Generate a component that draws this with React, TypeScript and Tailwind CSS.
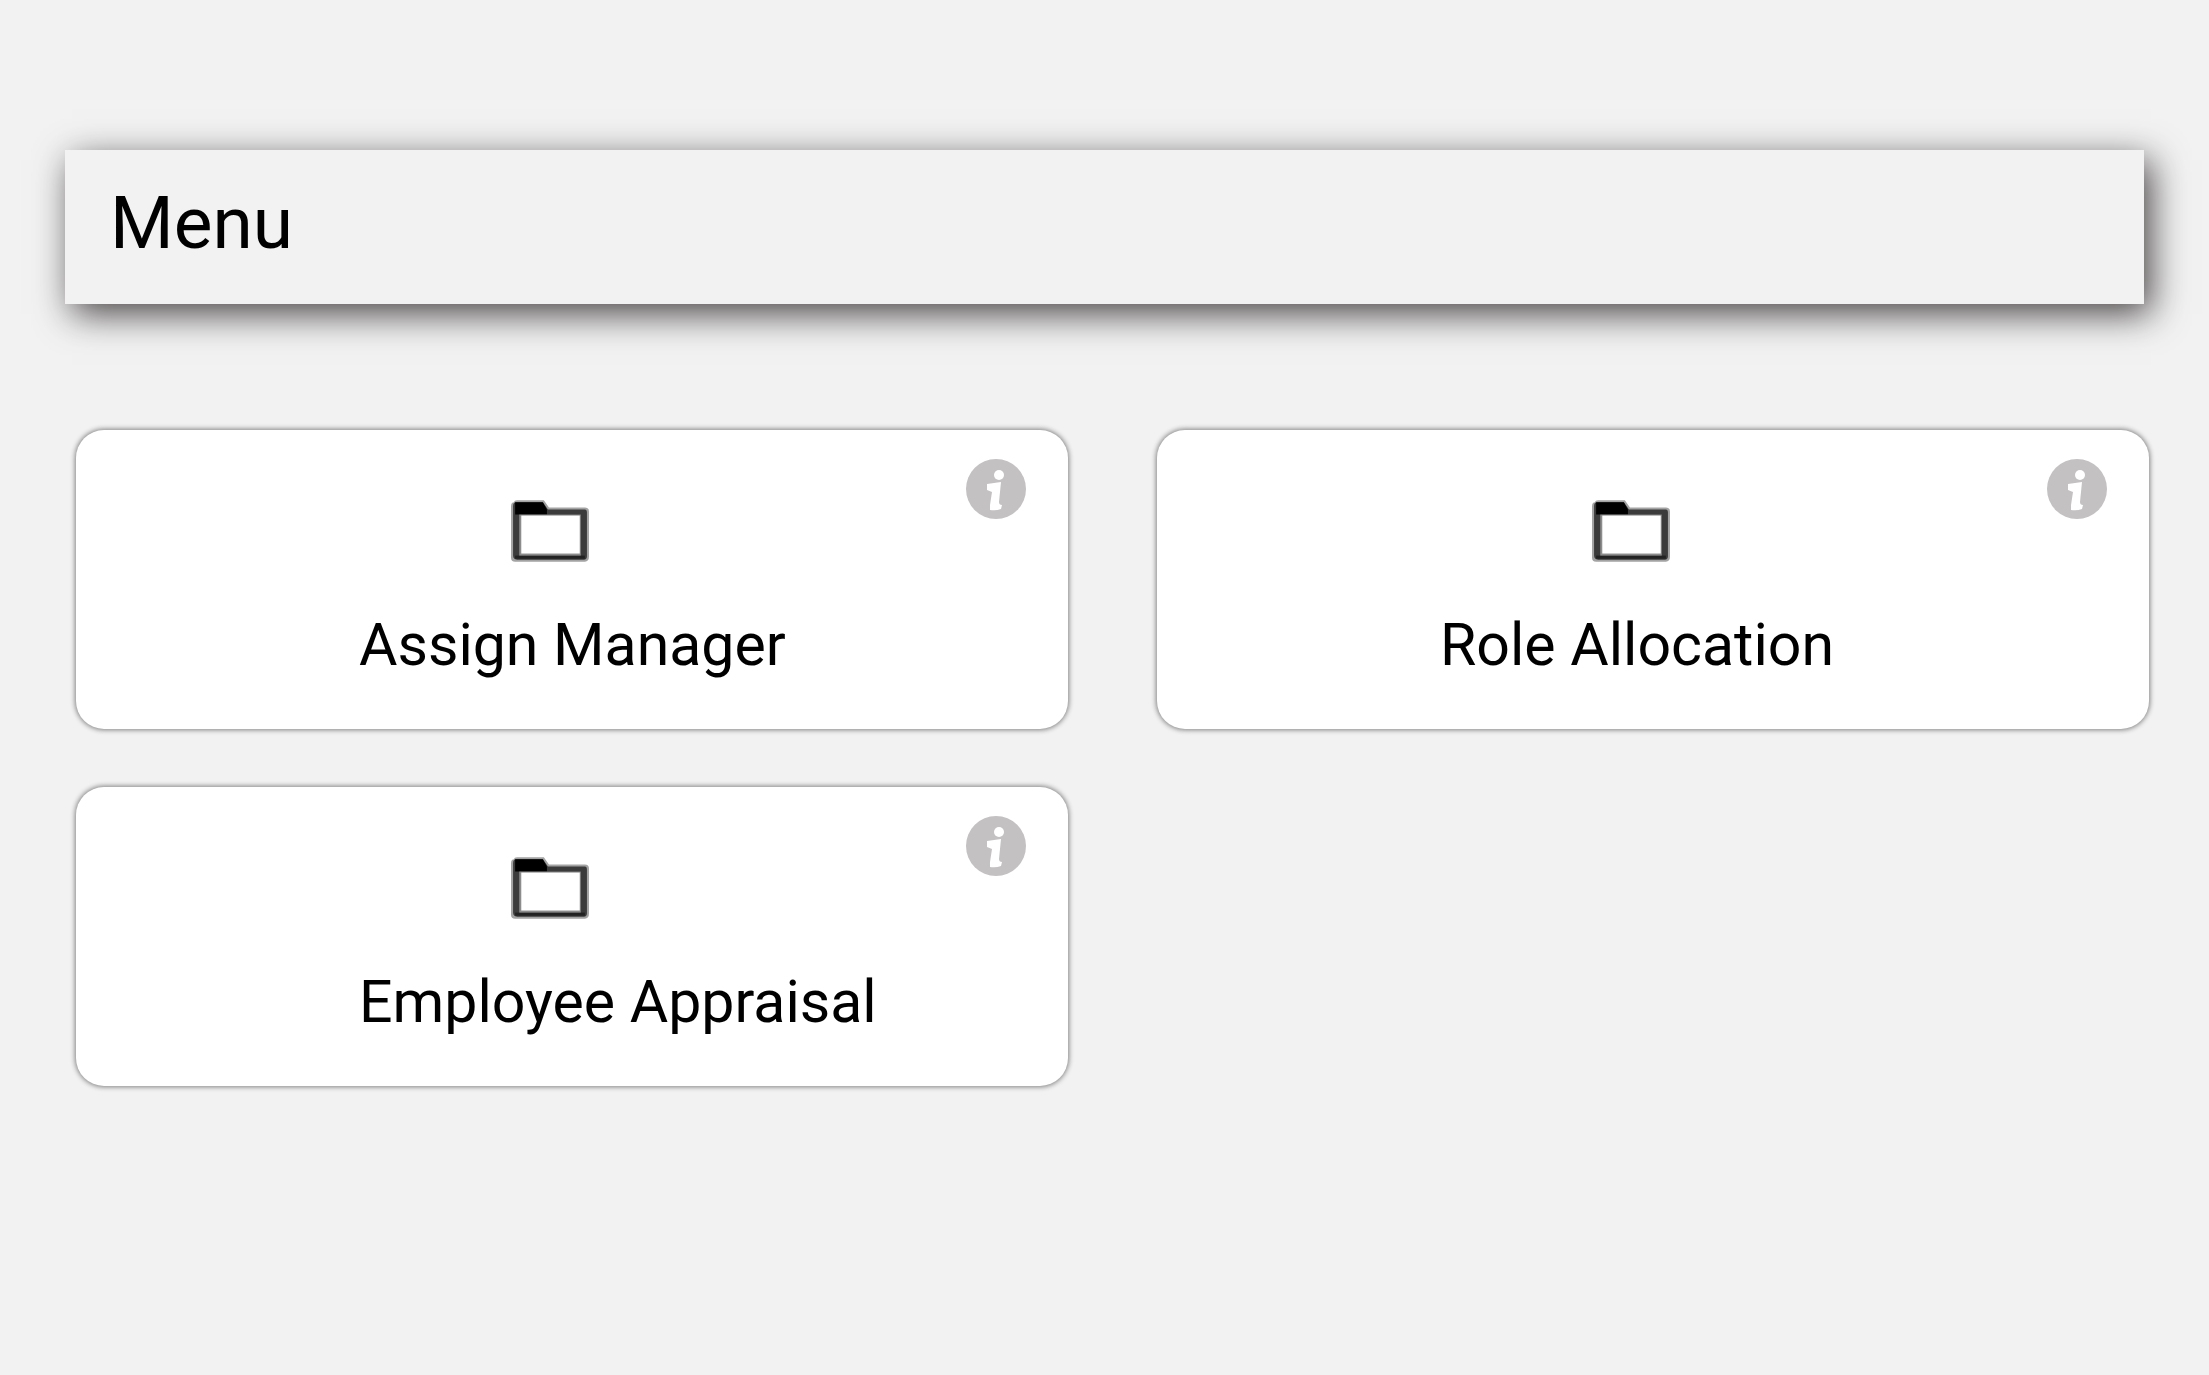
const menuItems = [
  { title: "Assign Manager", href: "#assign-manager" },
  { title: "Role Allocation", href: "#role-allocation" },
  { title: "Employee Appraisal", href: "#employee-appraisal" },
];

function FolderIcon() {
  return (
    <svg width="80" height="64" viewBox="0 0 78 62" aria-hidden="true">
      {/* soft outer edge */}
      <path
        d="M4 2 Q4 0 7 0 H33 L38 7 H73 Q77 7 77 11 V55 Q77 60 73 60 H5 Q1 60 1 56 V6 Q1 2 4 2 Z"
        fill="#a3a3a3"
      />
      <path
        d="M6 2 H32 L37 9 H73 Q75 9 75 12 V55 Q75 58 72 58 H7 Q3 58 3 54 V6 Q3 2 6 2 Z"
        fill="#3b3b3b"
      />
      <path d="M5 2 H32 L36 9 V14 H5 Z" fill="#000" />
      <rect x="5" y="54" width="68" height="3" fill="#222" />
      <rect x="9" y="14" width="60" height="40" fill="#8c8c8c" />
      <rect x="11" y="15" width="57" height="37" fill="#fff" />
    </svg>
  );
}

function InfoIcon() {
  return (
    <svg width="62" height="62" viewBox="0 0 62 62" aria-hidden="true">
      <circle cx="31" cy="31" r="30" fill="#c4c1c2" />
      <circle cx="34" cy="17" r="5" fill="#fff" />
      <path
        d="M22 26 Q29 25 36 24 L34 44 Q34 47 37 47 L36 51 Q31 53 25 52 L25 47 L27 34 L22 32 Z"
        fill="#fff"
      />
    </svg>
  );
}

function MenuCard({ title, href }: { title: string; href: string }) {
  return (
    <article className="relative rounded-[28px] bg-white shadow-[0_0_5px_1px_#808080]">
      <a href={href} className="block pt-[70px] pb-[46px]">
        <div className="flex justify-center pr-[45px]">
          <FolderIcon />
        </div>
        <h2 className="mt-[43px] pl-[283px] text-[59px] leading-[76px]">
          {title}
        </h2>
      </a>
      <button
        type="button"
        aria-label={`About ${title}`}
        className="absolute top-7 right-[41px] rounded-full"
      >
        <InfoIcon />
      </button>
    </article>
  );
}

export default function App() {
  return (
    <div className="min-h-screen bg-[#f2f2f2] pt-[150px] font-['Roboto',sans-serif] text-black">
      <header className="mx-[65px] bg-[#f2f2f2] px-[45px] pt-7 pb-9 shadow-[7px_10px_34px_#4b4647]">
        <h1 className="text-[73px] leading-[90px]">Menu</h1>
      </header>
      <main className="mt-[126px] grid grid-cols-2 gap-x-[89px] gap-y-[58px] pr-[60px] pl-[76px]">
        {menuItems.map((item) => (
          <MenuCard key={item.title} title={item.title} href={item.href} />
        ))}
      </main>
    </div>
  );
}
